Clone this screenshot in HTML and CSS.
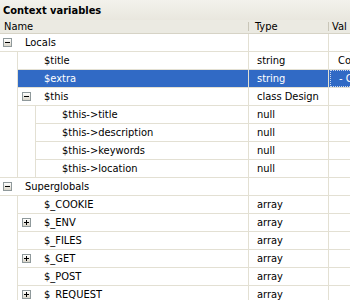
FILE: index.html
```html
<!DOCTYPE html>
<html lang="en">
<head>
    <meta charset="UTF-8">
    <meta name="viewport" content="width=device-width, initial-scale=1.0">
    <title>Context variables</title>
    <link rel="stylesheet" href="styles.css">
</head>
<body>
    <div class="panel">
        <div class="caption">Context variables</div>

        <div class="head">
            <div class="col-name">Name</div>
            <div class="col-type">Type</div>
            <div class="col-val">Val</div>
        </div>

        <div class="grid">
            <div class="row">
                <div class="tree">
                    <div class="name top"><span class="exp minus"></span>Locals</div>
                </div>
                <div class="type"></div>
                <div class="val"></div>
            </div>
            <div class="row">
                <div class="tree">
                    <div class="guide"></div>
                    <div class="name"><span class="exp"></span>$title</div>
                </div>
                <div class="type">string</div>
                <div class="val">Co</div>
            </div>
            <div class="row selected">
                <div class="tree">
                    <div class="guide"></div>
                    <div class="name"><span class="exp"></span>$extra</div>
                </div>
                <div class="type">string</div>
                <div class="val"><span class="focus">- C</span></div>
            </div>
            <div class="row">
                <div class="tree">
                    <div class="guide"></div>
                    <div class="name"><span class="exp minus"></span>$this</div>
                </div>
                <div class="type">class Design</div>
                <div class="val"></div>
            </div>
            <div class="row">
                <div class="tree">
                    <div class="guide"></div>
                    <div class="guide line"></div>
                    <div class="name"><span class="exp"></span>$this-&gt;title</div>
                </div>
                <div class="type">null</div>
                <div class="val"></div>
            </div>
            <div class="row">
                <div class="tree">
                    <div class="guide"></div>
                    <div class="guide line"></div>
                    <div class="name"><span class="exp"></span>$this-&gt;description</div>
                </div>
                <div class="type">null</div>
                <div class="val"></div>
            </div>
            <div class="row">
                <div class="tree">
                    <div class="guide"></div>
                    <div class="guide line"></div>
                    <div class="name"><span class="exp"></span>$this-&gt;keywords</div>
                </div>
                <div class="type">null</div>
                <div class="val"></div>
            </div>
            <div class="row last">
                <div class="tree">
                    <div class="guide"></div>
                    <div class="guide line"></div>
                    <div class="name"><span class="exp"></span>$this-&gt;location</div>
                </div>
                <div class="type">null</div>
                <div class="val"></div>
            </div>

            <div class="row">
                <div class="tree">
                    <div class="name top"><span class="exp minus"></span>Superglobals</div>
                </div>
                <div class="type"></div>
                <div class="val"></div>
            </div>
            <div class="row">
                <div class="tree">
                    <div class="guide"></div>
                    <div class="name"><span class="exp"></span>$_COOKIE</div>
                </div>
                <div class="type">array</div>
                <div class="val"></div>
            </div>
            <div class="row">
                <div class="tree">
                    <div class="guide"></div>
                    <div class="name"><span class="exp plus"></span>$_ENV</div>
                </div>
                <div class="type">array</div>
                <div class="val"></div>
            </div>
            <div class="row">
                <div class="tree">
                    <div class="guide"></div>
                    <div class="name"><span class="exp"></span>$_FILES</div>
                </div>
                <div class="type">array</div>
                <div class="val"></div>
            </div>
            <div class="row">
                <div class="tree">
                    <div class="guide"></div>
                    <div class="name"><span class="exp plus"></span>$_GET</div>
                </div>
                <div class="type">array</div>
                <div class="val"></div>
            </div>
            <div class="row">
                <div class="tree">
                    <div class="guide"></div>
                    <div class="name"><span class="exp"></span>$_POST</div>
                </div>
                <div class="type">array</div>
                <div class="val"></div>
            </div>
            <div class="row">
                <div class="tree">
                    <div class="guide"></div>
                    <div class="name"><span class="exp plus"></span>$_REQUEST</div>
                </div>
                <div class="type">array</div>
                <div class="val"></div>
            </div>
        </div>
    </div>
</body>
</html>
```

FILE: styles.css
```css
* {
    box-sizing: border-box;
}
body {
    margin: 0;
    background-color: #fff;
    font-family: "DejaVu Sans", sans-serif;
    font-stretch: condensed;
    font-size: 11px;
    color: #000;
    overflow: hidden;
}
.panel {
    width: 350px;
    height: 300px;
    overflow: hidden;
}
.caption {
    height: 20px;
    line-height: 22px;
    padding-left: 3px;
    font-size: 11px;
    font-weight: bold;
    background: linear-gradient(#f3f2ec, #e9e7de);
    white-space: nowrap;
}
.head {
    display: flex;
    height: 14px;
    line-height: 14px;
    background-color: #ebeae2;
    border-bottom: 1px solid #d6d3c6;
}
.head > div {
    white-space: nowrap;
    overflow: hidden;
}
.col-name {
    width: 248px;
    padding-left: 4px;
}
.col-type,
.col-val {
    background: linear-gradient(#c9c6b8, #c9c6b8) left 2px / 1px 9px no-repeat;
}
.col-type {
    width: 80px;
    padding-left: 7px;
}
.col-val {
    flex: 1;
    padding-left: 4px;
}

/* rows */
.row {
    display: flex;
    height: 18px;
    line-height: 18px;
    white-space: nowrap;
}
.tree {
    display: flex;
    width: 248px;
}
.guide {
    width: 17px;
}
.guide.line {
    width: 18px;
    border-left: 1px solid #e3e0d3;
}
.row.last .guide {
    border-bottom: 1px solid #e3e0d3;
}
.name {
    flex: 1;
    display: flex;
    align-items: center;
    padding-left: 4px;
    border-left: 1px solid #e3e0d3;
    border-bottom: 1px solid #e3e0d3;
    overflow: hidden;
}
.name.top {
    padding-left: 3px;
    border-left: none;
}
.type,
.val {
    padding-left: 8px;
    border-left: 1px solid #e3e0d3;
    border-bottom: 1px solid #e3e0d3;
    overflow: hidden;
}
.type {
    width: 80px;
}
.val {
    flex: 1;
    padding-left: 9px;
}
.selected .name,
.selected .type,
.selected .val {
    background-color: #316ac5;
    color: #fff;
}
.selected .val {
    padding-left: 1px;
}
.focus {
    display: block;
    height: 17px;
    padding-left: 8px;
    border: 1px dotted #c8d6ee;
    border-right: none;
    line-height: 16px;
}

/* expander boxes */
.exp {
    position: relative;
    flex: none;
    width: 9px;
    height: 9px;
    margin-right: 13px;
}
.exp.minus,
.exp.plus {
    border: 1px solid #8f999b;
    background: linear-gradient(#fff, #d9d5c9);
}
.exp.minus::before,
.exp.plus::before {
    content: "";
    position: absolute;
    left: 1px;
    top: 3px;
    width: 5px;
    height: 1px;
    background-color: #000;
}
.exp.plus::after {
    content: "";
    position: absolute;
    left: 3px;
    top: 1px;
    width: 1px;
    height: 5px;
    background-color: #000;
}
```
